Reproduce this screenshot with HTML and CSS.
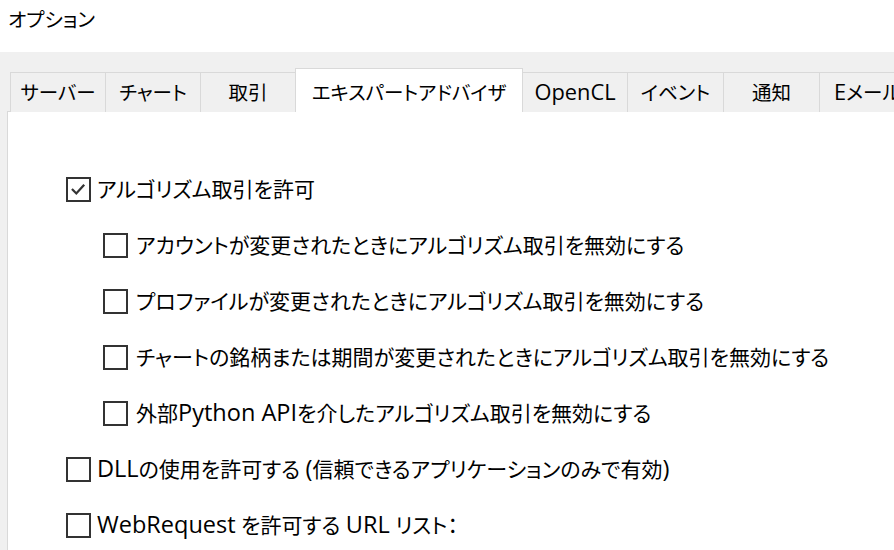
FILE: index.html
```html
<!DOCTYPE html>
<html lang="ja">
<head>
<meta charset="utf-8">
<title>オプション</title>
<link rel="stylesheet" href="styles.css">
</head>
<body>
<div class="window">
  <div class="titlebar">オプション</div>
  <div class="dialog">
    <div class="tabs">
      <div class="tab w95">サーバー</div>
      <div class="tab w95">チャート</div>
      <div class="tab w95">取引</div>
      <div class="tab active">エキスパートアドバイザ</div>
      <div class="tab w105"><span class="lat">OpenCL</span></div>
      <div class="tab w96">イベント</div>
      <div class="tab w96">通知</div>
      <div class="tab wrest"><span class="lat">E</span>メール</div>
    </div>
    <div class="panel">
      <div class="row">
        <span class="box checked"><svg viewBox="0 0 24 24" width="21" height="21"><path d="M4.5 11.5 L9.5 16.5 L18.5 6.5" fill="none" stroke="#333" stroke-width="2.6"/></svg></span>
        <span class="label">アルゴリズム取引を許可</span>
      </div>
      <div class="row sub">
        <span class="box"></span>
        <span class="label">アカウントが変更されたときにアルゴリズム取引を無効にする</span>
      </div>
      <div class="row sub">
        <span class="box"></span>
        <span class="label">プロファイルが変更されたときにアルゴリズム取引を無効にする</span>
      </div>
      <div class="row sub">
        <span class="box"></span>
        <span class="label">チャートの銘柄または期間が変更されたときにアルゴリズム取引を無効にする</span>
      </div>
      <div class="row sub">
        <span class="box"></span>
        <span class="label">外部<span class="lat">Python API</span>を介したアルゴリズム取引を無効にする</span>
      </div>
      <div class="row">
        <span class="box"></span>
        <span class="label"><span class="lat">DLL</span>の使用を許可する <span class="lat">(</span>信頼できるアプリケーションのみで有効<span class="lat">)</span></span>
      </div>
      <div class="row">
        <span class="box"></span>
        <span class="label"><span class="lat">WebRequest</span> を許可する <span class="lat">URL</span> リスト：</span>
      </div>
    </div>
  </div>
</div>
</body>
</html>
```

FILE: styles.css
```css
html, body {
  margin: 0;
  padding: 0;
  background: #ffffff;
}
body {
  width: 894px;
  height: 550px;
  overflow: hidden;
  font-family: "Open Sans", "Noto Sans CJK JP", sans-serif;
  font-feature-settings: "palt";
  color: #000;
}
.window {
  width: 894px;
  height: 550px;
  display: flex;
  flex-direction: column;
  overflow: hidden;
}
.titlebar {
  flex: none;
  height: 52px;
  box-sizing: border-box;
  padding: 6px 0 0 8px;
  font-size: 19.8px;
  line-height: 28px;
  background: #fff;
}
.dialog {
  flex: 1;
  background: #f0f0f0;
  padding: 16px 0 0 7px;
  display: flex;
  flex-direction: column;
  min-width: 0;
  min-height: 0;
  overflow: hidden;
}
.tabs {
  flex: none;
  display: flex;
  align-items: flex-end;
  height: 44px;
  margin-left: 3px;
  position: relative;
  z-index: 2;
  margin-bottom: -1px;
  white-space: nowrap;
}
.tab {
  height: 40px;
  box-sizing: border-box;
  border: 1px solid #d9d9d9;
  border-bottom: none;
  margin-right: -1px;
  background: #f0f0f0;
  font-size: 19.5px;
  line-height: 40px;
  text-align: center;
  flex: none;
}
.w95 { width: 96px; }
.w105 { width: 106px; }
.w96 { width: 97px; }
.wrest { width: 76px; text-align: left; padding-left: 14px; overflow: hidden; }
.tab.active {
  width: 228px;
  height: 44px;
  line-height: 48px;
  background: #fff;
  position: relative;
  z-index: 3;
}
.lat {
  font-size: 1.12em;
  line-height: 1;
}
.panel {
  flex: 1;
  background: #fff;
  border: 1px solid #d9d9d9;
  border-right: none;
  padding: 49px 0 0 58px;
}
.row {
  height: 56px;
  display: flex;
  align-items: center;
  font-size: 21px;
  white-space: nowrap;
}
.row.sub {
  padding-left: 37px;
}
.row.sub .label {
  margin-left: 8px;
}
.box {
  width: 25px;
  height: 25px;
  box-sizing: border-box;
  border: 2px solid #333;
  background: #fff;
  flex: none;
  display: flex;
  align-items: center;
  justify-content: center;
}
.label {
  margin-left: 6px;
  line-height: 28px;
}
```
